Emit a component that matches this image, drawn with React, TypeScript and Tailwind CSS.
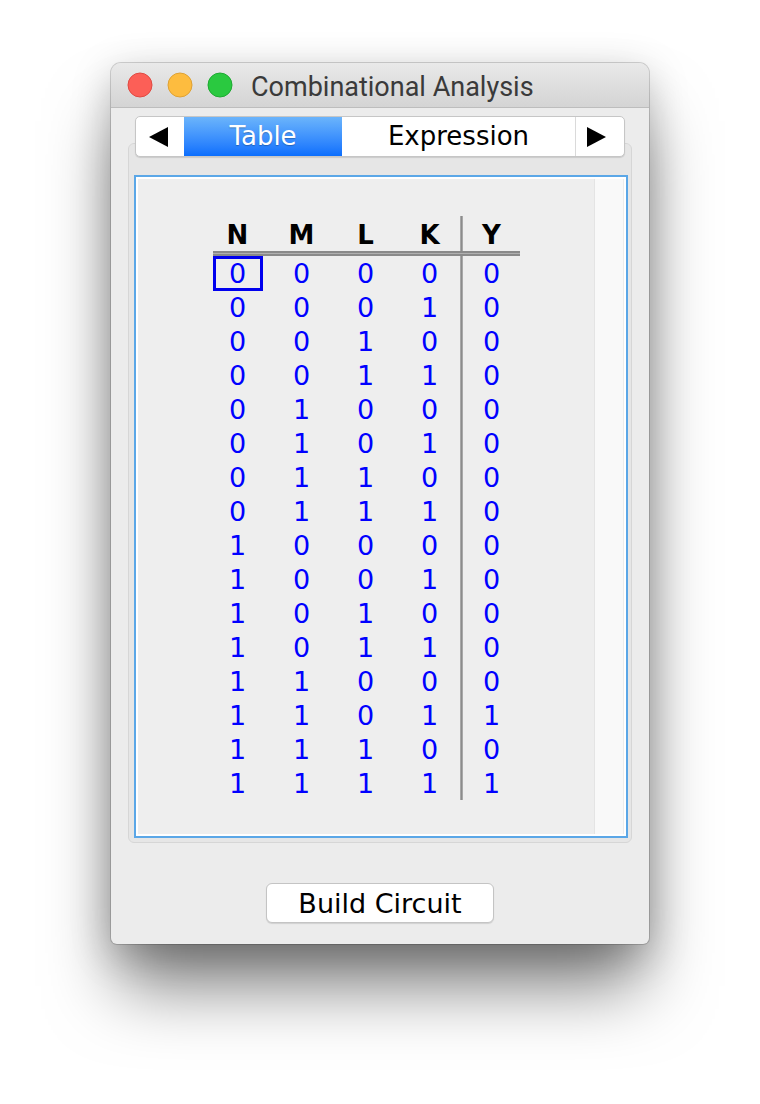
import React from "react";

const COLS = ["N", "M", "L", "K"];

// 16 rows of the truth table, Y output
const OUT = [0, 0, 0, 0, 0, 0, 0, 0, 0, 0, 0, 0, 0, 1, 0, 1];

function bits(i: number) {
  return [(i >> 3) & 1, (i >> 2) & 1, (i >> 1) & 1, i & 1];
}

function VLine() {
  return (
    <div className="flex w-[12px] shrink-0 self-stretch pl-[5px]">
      <div className="w-[3px] bg-[#8c8c8c] border-x border-[#a8a8a8]" />
    </div>
  );
}

function TruthTable() {
  return (
    <div className="flex flex-col w-[307px] font-['DejaVu_Sans',sans-serif]">
      <div className="flex h-[35px] items-end">
        <div className="flex gap-[14px]">
          {COLS.map((c) => (
            <div key={c} className="w-[50px] text-center text-[26px] leading-[32px] font-bold text-black">
              {c}
            </div>
          ))}
        </div>
        <VLine />
        <div className="w-[50px] text-center text-[26px] leading-[32px] font-bold text-black">Y</div>
      </div>
      <div className="h-[5px] w-full bg-[#b0b0b0] border-y-2 border-[#8a8a8a]" />
      {OUT.map((y, i) => (
        <div key={i} className="flex h-[34px]">
          <div className="flex gap-[14px]">
            {bits(i).map((b, j) => (
              <div
                key={j}
                className={
                  i === 0 && j === 0
                    ? "w-[50px] h-[35px] -mb-[1px] border-[3px] border-[#0000ee] flex items-center justify-center text-[27px] text-[#0000ff] leading-none"
                    : "w-[50px] h-[34px] flex items-center justify-center text-[27px] text-[#0000ff] leading-none"
                }
              >
                {b}
              </div>
            ))}
          </div>
          <VLine />
          <div className="w-[50px] flex items-center justify-center text-[27px] text-[#0000ff] leading-none">{y}</div>
        </div>
      ))}
    </div>
  );
}

function Light({ fill, ring }: { fill: string; ring: string }) {
  return (
    <svg width="26" height="26" viewBox="0 0 26 26">
      <circle cx="13" cy="13" r="12" fill={fill} stroke={ring} strokeWidth="1" />
    </svg>
  );
}

export default function App() {
  return (
    <div className="min-h-[1104px] bg-white pt-[63px] pl-[111px]">
      <div className="w-[538px] h-[881px] rounded-t-[10px] rounded-b-[6px] bg-[#ececec] flex flex-col shadow-[0_50px_70px_-8px_rgba(0,0,0,0.5),0_10px_40px_rgba(0,0,0,0.22),0_0_0_1px_rgba(0,0,0,0.16)] overflow-hidden">
        {/* title bar */}
        <div className="h-[45px] shrink-0 flex items-center pl-[16px] gap-[14px] bg-gradient-to-b from-[#e9e9e9] to-[#d4d4d4] border-b border-[#bdbdbd]">
          <Light fill="#fc5f57" ring="#df4a42" />
          <Light fill="#fdbc3f" ring="#dea134" />
          <Light fill="#2ac940" ring="#1ea932" />
          <span className="ml-[4px] mt-[4px] text-[27px] leading-none text-[#3a3a3a] font-['Roboto',sans-serif]">
            Combinational Analysis
          </span>
        </div>

        {/* tab strip */}
        <div className="relative z-10 mt-[8px] mx-[24px] h-[41px] flex bg-white border border-[#c6c6c6] rounded-[5px] shadow-[0_1px_1px_rgba(0,0,0,0.12)] overflow-hidden font-['DejaVu_Sans',sans-serif]">
          <div className="w-[48px] flex items-center justify-center pr-[2px]">
            <svg width="20" height="20" viewBox="0 0 20 20">
              <polygon points="0,10 19,0 19,20" fill="#000" />
            </svg>
          </div>
          <div className="w-[158px] flex items-center justify-center bg-gradient-to-b from-[#6bb4fb] to-[#0a6efd] text-white text-[26px] [text-shadow:0_1px_1px_rgba(0,0,0,0.25)]">
            Table
          </div>
          <div className="w-[234px] flex items-center justify-center text-black text-[26px] border-r border-[#dadada]">
            Expression
          </div>
          <div className="flex-1 flex items-center justify-center pr-[6px]">
            <svg width="20" height="20" viewBox="0 0 20 20">
              <polygon points="19,10 0,0 0,20" fill="#000" />
            </svg>
          </div>
        </div>

        {/* tab pane */}
        <div className="-mt-[14px] mx-[17px] h-[700px] rounded-[6px] bg-[#e6e6e6] border border-[#d6d6d6] pt-[31px] pl-[5px] pr-[3px] pb-[4px] flex flex-col">
          <div className="flex-1 border-2 border-[#5ba7e7] bg-white p-[2px] flex">
            <div className="flex-1 bg-[#eeeeee] flex justify-center pt-[37px]">
              <TruthTable />
            </div>
            <div className="w-[30px] bg-[#f9f9f9] border-l border-[#e4e4e4] border-r border-r-[#ececec]" />
          </div>
        </div>

        {/* button */}
        <div className="flex justify-center pt-[40px]">
          <button className="w-[228px] h-[40px] rounded-[6px] bg-white border border-[#c4c4c4] shadow-[0_1px_1px_rgba(0,0,0,0.12)] text-[27px] text-black font-['DejaVu_Sans',sans-serif] leading-none">
            Build Circuit
          </button>
        </div>
      </div>
    </div>
  );
}
